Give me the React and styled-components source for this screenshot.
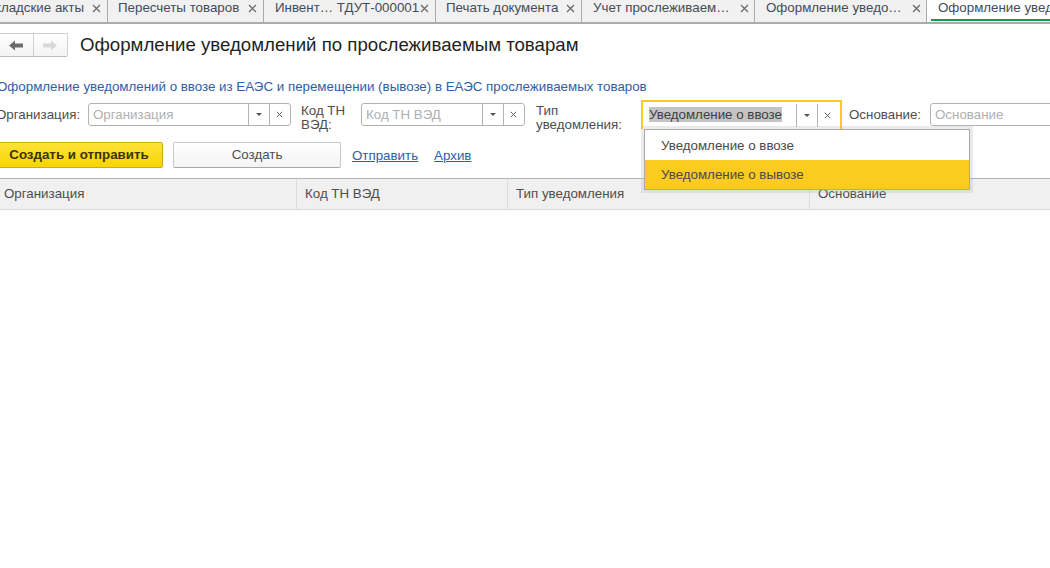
import styled, { createGlobalStyle } from "styled-components";

const Global = createGlobalStyle`
  html, body {
    margin: 0;
    padding: 0;
    width: 1050px;
    height: 568px;
    overflow: hidden;
    background: #fff;
  }
  * {
    box-sizing: border-box;
  }
`;

const Page = styled.div`
  position: relative;
  width: 1050px;
  height: 568px;
  overflow: hidden;
  font-family: "Liberation Sans", Arial, sans-serif;
  font-size: 13.33px;
  color: #4b4b4b;
`;

const TabBar = styled.div`
  display: flex;
  height: 24px;
  background: #f1f1f1;
  border-bottom: 2px solid #ababab;
`;

const Tab = styled.div`
  position: relative;
  flex: none;
  width: ${(p) => p.$width}px;
  display: flex;
  align-items: flex-start;
  justify-content: ${(p) => (p.$cut ? "flex-end" : "flex-start")};
  padding: 0 ${(p) => (p.$cut ? 23 : 0)}px 0 ${(p) => (p.$cut ? 0 : p.$pad)}px;
  line-height: 15px;
  white-space: nowrap;
  overflow: hidden;
  border-right: ${(p) => (p.$active ? "none" : "1px solid #ababab")};
  background: ${(p) => (p.$active ? "#fff" : "transparent")};
  color: #444c58;
`;

const TabClose = styled.svg`
  position: absolute;
  top: 4px;
  right: ${(p) => p.$right}px;
  width: 9px;
  height: 9px;
`;

const ActiveLine = styled.div`
  position: absolute;
  left: 4px;
  right: 0;
  bottom: 1px;
  height: 2px;
  background: #0f9d4c;
`;

const Header = styled.div`
  display: flex;
  align-items: center;
  gap: 12px;
  margin: 9px 0 0 -2px;
  height: 24px;
`;

const NavGroup = styled.div`
  display: flex;
  width: 70px;
  height: 24px;
  border: 1px solid #d0d0d0;
  border-bottom-color: #bcbcbc;
  border-radius: 2px;
  background: linear-gradient(#fff, #f4f4f4);
`;

const NavButton = styled.div`
  flex: 1;
  display: flex;
  align-items: center;
  justify-content: center;
  & + & {
    border-left: 1px solid #d0d0d0;
  }
`;

const Title = styled.h1`
  margin: 0;
  font-size: 18.67px;
  font-weight: 400;
  color: #1f1f1f;
  line-height: 24px;
  white-space: nowrap;
`;

const Subtitle = styled.div`
  margin: 22px 0 0 -3px;
  height: 16px;
  line-height: 16px;
  color: #2f5ea6;
  white-space: nowrap;
`;

const FilterRow = styled.div`
  display: flex;
  align-items: flex-start;
  margin: 8px 0 0 -4px;
  height: 29px;
  width: 1150px;
`;

const Label = styled.div`
  flex: none;
  width: ${(p) => p.$width}px;
  margin-left: ${(p) => p.$left}px;
  padding-top: ${(p) => (p.$two ? 1 : 5)}px;
  line-height: 14px;
  color: #4e4e4e;
`;

const Field = styled.div`
  flex: none;
  display: flex;
  width: ${(p) => p.$width}px;
  height: 23px;
  background: #fff;
  border: 1px solid #b3b3b3;
  border-radius: 3px;
`;

const FocusField = styled(Field)`
  height: 29px;
  margin-top: -3px;
  padding: 2px 2px 2px 2px;
  border: 2px solid #fccb1f;
  border-bottom: none;
  border-radius: 0;
`;

const FieldText = styled.div`
  flex: 1;
  min-width: 0;
  padding: 3px 4px;
  line-height: 15px;
  color: #b0b0b0;
  white-space: nowrap;
  overflow: hidden;
`;

const Selected = styled.span`
  background: #c4c4c4;
  color: #3f3f3f;
`;

const FieldButton = styled.div`
  flex: none;
  width: ${(p) => p.$width}px;
  display: flex;
  align-items: center;
  justify-content: center;
  padding-right: 1px;
  border-left: 1px solid #b3b3b3;
`;

const Caret = styled.div`
  width: 0;
  height: 0;
  border-left: 3px solid transparent;
  border-right: 3px solid transparent;
  border-top: 3px solid #555;
`;

const Clear = styled.svg`
  width: 7px;
  height: 7px;
`;

const ActionRow = styled.div`
  display: flex;
  align-items: center;
  margin: 10px 0 0 -5px;
  height: 26px;
`;

const PrimaryButton = styled.div`
  flex: none;
  width: 168px;
  height: 26px;
  line-height: 24px;
  text-align: center;
  font-weight: 700;
  color: #3b3300;
  background: linear-gradient(#fde23a, #f7d500);
  border: 1px solid #c9ad12;
  border-radius: 2px;
`;

const PlainButton = styled.div`
  flex: none;
  width: 168px;
  height: 26px;
  margin-left: 10px;
  line-height: 24px;
  text-align: center;
  color: #4e4e4e;
  background: linear-gradient(#fff, #f3f3f3);
  border: 1px solid #c8c8c8;
  border-bottom-color: #a8a8a8;
  border-radius: 2px;
`;

const LinkText = styled.a`
  flex: none;
  margin-left: ${(p) => p.$left}px;
  color: #2f5ea6;
  text-decoration: underline;
`;

const TableHead = styled.div`
  display: flex;
  height: 32px;
  margin-top: 10px;
  background: #f0f0f0;
  border-top: 1px solid #b4b4b4;
  border-bottom: 1px solid #d8d8d8;
`;

const HeadCell = styled.div`
  flex: ${(p) => (p.$width ? "none" : 1)};
  width: ${(p) => p.$width}px;
  padding: 7px 8px 0 ${(p) => p.$pad || 8}px;
  line-height: 15px;
  color: #4e4e4e;
  & + & {
    border-left: 1px solid #dcdcdc;
  }
`;

const Popup = styled.div`
  position: absolute;
  left: 644px;
  top: 129px;
  width: 326px;
  height: 61px;
  background: #fff;
  border: 1px solid #a9a9a9;
  box-shadow: 0 0 0 3px rgba(170, 170, 170, 0.25);
`;

const PopupItem = styled.div`
  height: ${(p) => (p.$active ? 29 : 30)}px;
  padding: ${(p) => (p.$active ? 0 : 1)}px 0 0 16px;
  line-height: 29px;
  color: #4a4a4a;
  background: ${(p) => (p.$active ? "#fbcb1e" : "#fff")};
`;

const Cross = ({ color = "#666" }) => (
  <path d="M1 1 L8 8 M8 1 L1 8" stroke={color} strokeWidth="1.2" fill="none" />
);

const TabItem = ({ text, width, pad = 11, right = 6, cut, active }) => (
  <Tab $width={width} $pad={pad} $cut={cut} $active={active}>
    <span>{text}</span>
    {!active && (
      <TabClose $right={right} viewBox="0 0 9 9">
        <Cross />
      </TabClose>
    )}
    {active && <ActiveLine />}
  </Tab>
);

const Arrow = ({ dir, color }) => (
  <svg width="14" height="11" viewBox="0 0 14 11">
    <path
      d={dir === "left" ? "M0 5.5 L6 0.5 V3.5 H14 V7.5 H6 V10.5 Z" : "M14 5.5 L8 0.5 V3.5 H0 V7.5 H8 V10.5 Z"}
      fill={color}
    />
  </svg>
);

const Select = ({ width, placeholder }) => (
  <Field $width={width}>
    <FieldText>{placeholder}</FieldText>
    <FieldButton $width={21}>
      <Caret />
    </FieldButton>
    <FieldButton $width={21}>
      <Clear viewBox="0 0 9 9">
        <Cross color="#555" />
      </Clear>
    </FieldButton>
  </Field>
);

export default function App() {
  return (
    <Page>
      <Global />
      <TabBar>
        <TabItem text="Складские акты" width={108} cut />
        <TabItem text="Пересчеты товаров" width={156} pad={10} />
        <TabItem text="Инвент… ТДУТ-000001" width={172} />
        <TabItem text="Печать документа" width={146} pad={10} />
        <TabItem text="Учет прослеживаем…" width={173} right={5} />
        <TabItem text="Оформление уведо…" width={172} right={5} />
        <TabItem text="Оформление уведомлений" width={180} active />
      </TabBar>

      <Header>
        <NavGroup>
          <NavButton>
            <Arrow dir="left" color="#6b6b6b" />
          </NavButton>
          <NavButton>
            <Arrow dir="right" color="#d8d8d8" />
          </NavButton>
        </NavGroup>
        <Title>Оформление уведомлений по прослеживаемым товарам</Title>
      </Header>

      <Subtitle>Оформление уведомлений о ввозе из ЕАЭС и перемещении (вывозе) в ЕАЭС прослеживаемых товаров</Subtitle>

      <FilterRow>
        <Label $width={92} $left={0}>Организация:</Label>
        <Select width={203} placeholder="Организация" />
        <Label $width={60} $left={10} $two>Код ТН<br />ВЭД:</Label>
        <Select width={164} placeholder="Код ТН ВЭД" />
        <Label $width={105} $left={11} $two>Тип<br />уведомления:</Label>
        <FocusField $width={201}>
          <FieldText>
            <Selected>Уведомление о ввозе</Selected>
          </FieldText>
          <FieldButton $width={21}>
            <Caret />
          </FieldButton>
          <FieldButton $width={21}>
            <Clear viewBox="0 0 9 9">
              <Cross color="#555" />
            </Clear>
          </FieldButton>
        </FocusField>
        <Label $width={81} $left={7}>Основание:</Label>
        <Select width={200} placeholder="Основание" />
      </FilterRow>

      <ActionRow>
        <PrimaryButton>Создать и отправить</PrimaryButton>
        <PlainButton>Создать</PlainButton>
        <LinkText $left={11}>Отправить</LinkText>
        <LinkText $left={16}>Архив</LinkText>
      </ActionRow>

      <TableHead>
        <HeadCell $width={296} $pad={4}>Организация</HeadCell>
        <HeadCell $width={211}>Код ТН ВЭД</HeadCell>
        <HeadCell $width={302}>Тип уведомления</HeadCell>
        <HeadCell>Основание</HeadCell>
      </TableHead>

      <Popup>
        <PopupItem>Уведомление о ввозе</PopupItem>
        <PopupItem $active>Уведомление о вывозе</PopupItem>
      </Popup>
    </Page>
  );
}
